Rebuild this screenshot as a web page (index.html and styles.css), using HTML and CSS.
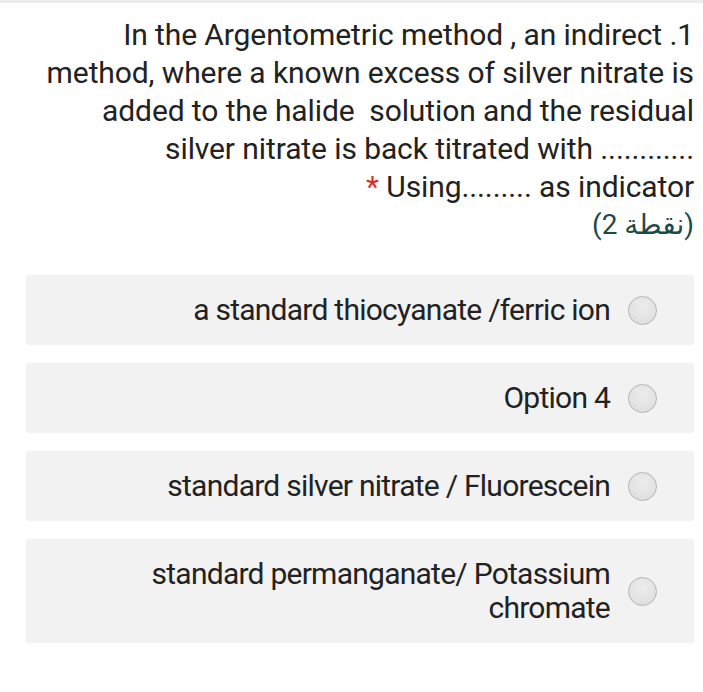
FILE: index.html
```html
<!DOCTYPE html>
<html>
<head>
<meta charset="utf-8">
<link rel="stylesheet" href="styles.css">
</head>
<body>
<div class="topline"></div>
<div class="question">
  <div class="qtext">In the Argentometric method , an indirect .1<br>method, where a known excess of silver nitrate is<br>added to the halide&nbsp; solution and the residual<br>silver nitrate is back titrated with ............<br><span class="req">*</span> Using......... as indicator</div>
  <div class="points">(2 نقطة)</div>
</div>
<div class="options">
  <label class="option"><span class="otext">a standard thiocyanate /ferric ion</span><span class="radio"></span></label>
  <label class="option"><span class="otext">Option 4</span><span class="radio"></span></label>
  <label class="option"><span class="otext">standard silver nitrate / Fluorescein</span><span class="radio"></span></label>
  <label class="option tall"><span class="otext">standard permanganate/ Potassium<br>chromate</span><span class="radio"></span></label>
</div>
</body>
</html>
```
FILE: styles.css
```css
html, body {
  margin: 0;
  padding: 0;
  background: #ffffff;
}
body {
  font-family: Roboto, "DejaVu Sans", sans-serif;
  color: #222222;
  width: 703px;
}
.topline {
  height: 3px;
  background: #ececec;
}
.question {
  padding: 13px 9px 0 20px;
  text-align: right;
}
.qtext {
  font-size: 30px;
  line-height: 38px;
  letter-spacing: -0.1px;
  white-space: nowrap;
}
.req {
  color: #d93025;
}
.points {
  font-size: 28px;
  line-height: 38px;
  color: #1d4a48;
}
.options {
  margin: 31px 9px 0 26px;
  display: flex;
  flex-direction: column;
  gap: 18px;
}
.option {
  background: #f2f2f2;
  min-height: 70px;
  display: flex;
  align-items: center;
  justify-content: flex-end;
  padding: 0 37px 0 20px;
  gap: 18px;
}
.option.tall {
  padding-top: 18px;
  padding-bottom: 18px;
  min-height: 0;
}
.otext {
  font-size: 30px;
  line-height: 34px;
  letter-spacing: -0.75px;
  text-align: right;
}
.radio {
  flex: none;
  width: 27px;
  height: 27px;
  border-radius: 50%;
  border: 1px solid #b4b4b4;
  background: radial-gradient(circle at 50% 35%, #ececec, #dcdcdc);
}
```
